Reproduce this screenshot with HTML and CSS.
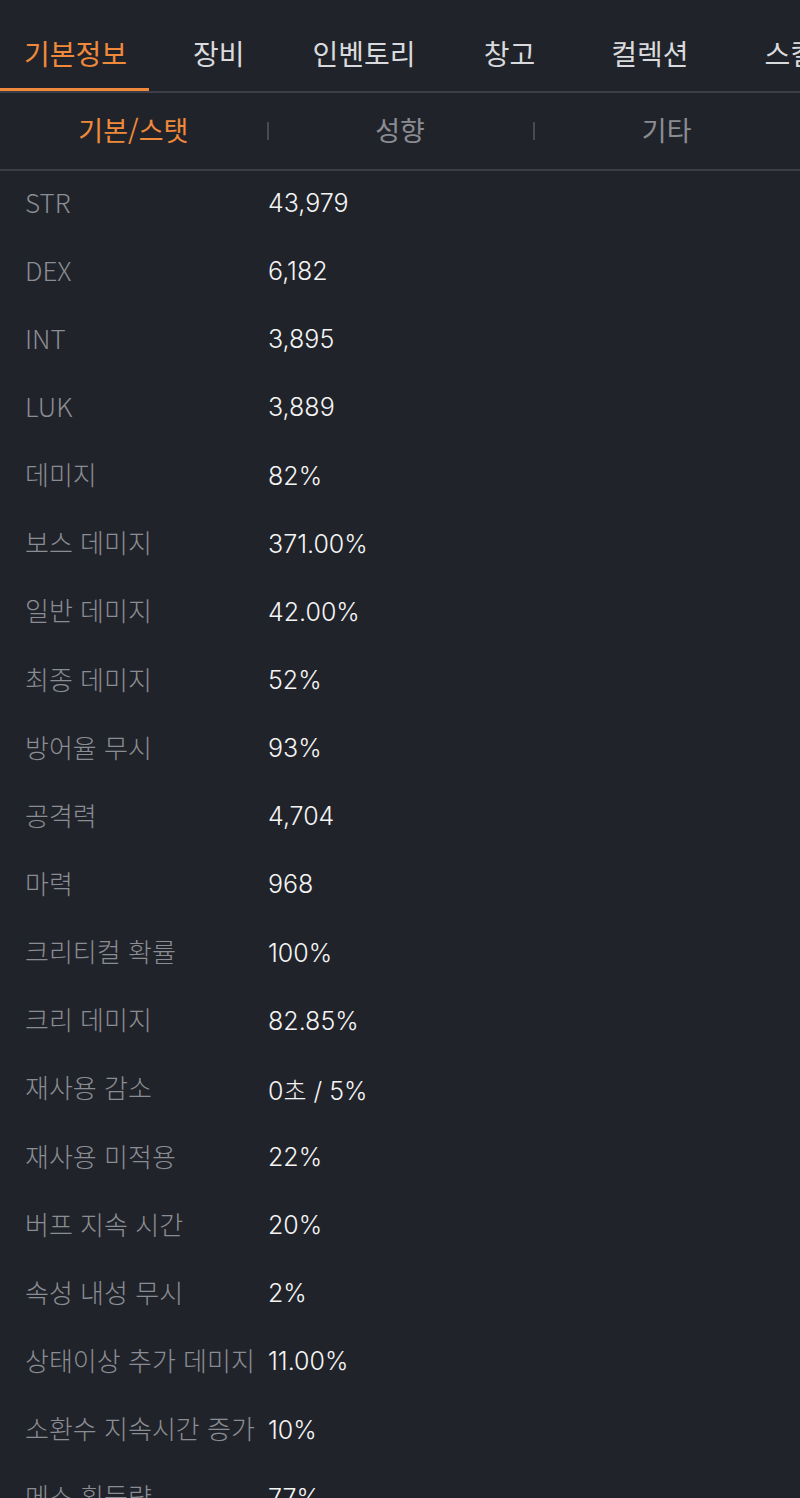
FILE: index.html
```html
<!DOCTYPE html>
<html lang="ko">
<head>
<meta charset="utf-8">
<title>캐릭터 정보</title>
<link rel="stylesheet" href="styles.css">
</head>
<body>
<div class="page">
  <nav class="tabs">
    <div class="tab active">기본정보</div>
    <div class="tab">장비</div>
    <div class="tab">인벤토리</div>
    <div class="tab">창고</div>
    <div class="tab wide">컬렉션</div>
    <div class="tab wide">스킬</div>
  </nav>
  <nav class="subtabs">
    <div class="subtab active">기본/스탯</div>
    <div class="subtab">성향</div>
    <div class="subtab">기타</div>
  </nav>
  <div class="stats">
    <div class="row"><span class="label">STR</span><span class="value">43,979</span></div>
    <div class="row"><span class="label">DEX</span><span class="value">6,182</span></div>
    <div class="row"><span class="label">INT</span><span class="value">3,895</span></div>
    <div class="row"><span class="label">LUK</span><span class="value">3,889</span></div>
    <div class="row"><span class="label">데미지</span><span class="value">82%</span></div>
    <div class="row"><span class="label">보스 데미지</span><span class="value">371.00%</span></div>
    <div class="row"><span class="label">일반 데미지</span><span class="value">42.00%</span></div>
    <div class="row"><span class="label">최종 데미지</span><span class="value">52%</span></div>
    <div class="row"><span class="label">방어율 무시</span><span class="value">93%</span></div>
    <div class="row"><span class="label">공격력</span><span class="value">4,704</span></div>
    <div class="row"><span class="label">마력</span><span class="value">968</span></div>
    <div class="row"><span class="label">크리티컬 확률</span><span class="value">100%</span></div>
    <div class="row"><span class="label">크리 데미지</span><span class="value">82.85%</span></div>
    <div class="row"><span class="label">재사용 감소</span><span class="value">0초 / 5%</span></div>
    <div class="row"><span class="label">재사용 미적용</span><span class="value">22%</span></div>
    <div class="row"><span class="label">버프 지속 시간</span><span class="value">20%</span></div>
    <div class="row"><span class="label">속성 내성 무시</span><span class="value">2%</span></div>
    <div class="row"><span class="label">상태이상 추가 데미지</span><span class="value">11.00%</span></div>
    <div class="row"><span class="label">소환수 지속시간 증가</span><span class="value">10%</span></div>
    <div class="row"><span class="label">메소 획득량</span><span class="value">77%</span></div>
  </div>
</div>
</body>
</html>
```
FILE: styles.css
```css
html, body {
  margin: 0;
  padding: 0;
  background: #21232a;
}
body {
  font-family: "Noto Sans CJK KR", "Noto Sans", sans-serif;
  color: #f2f2f2;
  width: 800px;
  height: 1498px;
  overflow: hidden;
}
.page {
  width: 800px;
}
.tabs {
  display: flex;
  gap: 20px;
  height: 91px;
  border-bottom: 2px solid #3b3e46;
  white-space: nowrap;
  overflow: hidden;
}
.tab {
  position: relative;
  flex: none;
  padding: 14px 24px 0;
  display: flex;
  align-items: center;
  font-size: 28px;
  font-weight: 400;
  color: #d9dadd;
  box-sizing: border-box;
}
.tab:first-child {
  padding-right: 22px;
}
.tab.wide {
  margin-left: 8px;
}
.tab.active {
  color: #f0893b;
}
.tab.active::after {
  content: "";
  position: absolute;
  left: 0;
  right: 0;
  bottom: -2px;
  height: 5px;
  background: #f0893b;
}
.subtabs {
  display: flex;
  height: 76px;
  border-bottom: 2px solid #3b3e46;
}
.subtab {
  flex: 1;
  display: flex;
  align-items: center;
  justify-content: center;
  font-size: 27px;
  color: #8a8c92;
  position: relative;
  padding-bottom: 4px;
}
.subtab.active {
  color: #f0893b;
}
.subtab + .subtab::before {
  content: "";
  position: absolute;
  left: 0;
  top: 29px;
  width: 2px;
  height: 18px;
  background: #474a52;
}
.stats {
  display: flex;
  flex-direction: column;
  margin-top: -4px;
}
.row {
  height: 68.15px;
  display: flex;
  align-items: center;
  padding-left: 25px;
}
.label {
  width: 243px;
  flex: none;
  font-size: 26px;
  font-weight: 300;
  color: #8a8d93;
  white-space: nowrap;
}
.value {
  font-family: Inter, "Noto Sans CJK KR", sans-serif;
  font-size: 25px;
  font-weight: 300;
  color: #f4f4f4;
  white-space: nowrap;
  margin-top: 4px;
}
```
